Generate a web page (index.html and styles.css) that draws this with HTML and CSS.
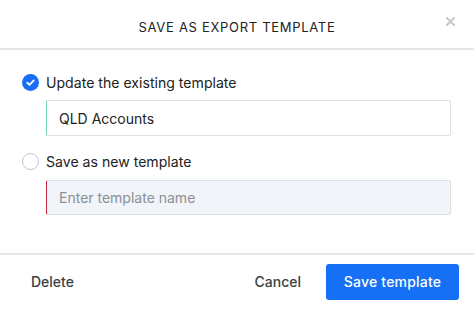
FILE: index.html
```html
<!DOCTYPE html>
<html lang="en">
<head>
  <meta charset="UTF-8" />
  <meta name="viewport" content="width=device-width, initial-scale=1.0"/>
  <title>Save as export template</title>
  <link rel="stylesheet" href="styles.css">
</head>
<body>

  <div class="dialog">
    <header class="dialog-head">
      <h1>Save as export template</h1>
      <button class="close-btn" aria-label="Close">
        <svg width="9" height="9" viewBox="0 0 9 9"><path d="M1 1 L8 8 M8 1 L1 8" stroke="#c4c4c4" stroke-width="1.8" stroke-linecap="round"/></svg>
      </button>
    </header>

    <main class="dialog-body">
      <!-- Existing template -->
      <label class="choice">
        <span class="radio checked">
          <svg width="17" height="17" viewBox="0 0 17 17"><circle cx="8.5" cy="8.5" r="8.5" fill="#1a6ef5"/><path d="M5.2 8.7 L7.5 10.9 L11.8 6.4" fill="none" stroke="#fff" stroke-width="1.8" stroke-linecap="round" stroke-linejoin="round"/></svg>
        </span>
        Update the existing template
      </label>
      <div class="field valid">QLD Accounts</div>

      <!-- New template -->
      <label class="choice second">
        <span class="radio"></span>
        Save as new template
      </label>
      <div class="field invalid placeholder">Enter template name</div>
    </main>

    <footer class="dialog-foot">
      <button class="text-btn">Delete</button>
      <div class="foot-right">
        <button class="text-btn">Cancel</button>
        <button class="primary-btn">Save template</button>
      </div>
    </footer>
  </div>

</body>
</html>
```

FILE: styles.css
```css
:root {
  --text: #222;
  --muted: #8a9099;
  --line: #e6e6e6;
  --primary: #1570f5;
  --ok: #6fd6ae;
  --bad: #c8283c;
}

* {
  box-sizing: border-box;
  margin: 0;
  padding: 0;
}

body {
  font-family: Inter, 'Noto Sans', sans-serif;
  background: #fff;
  color: var(--text);
}

.dialog {
  width: 474px;
  height: 310px;
  display: flex;
  flex-direction: column;
}

.dialog-head {
  position: relative;
  height: 50px;
  border-bottom: 2px solid var(--line);
  display: flex;
  align-items: center;
  justify-content: center;
  padding-top: 5px;
}

.dialog-head h1 {
  font-size: 13px;
  font-weight: 400;
  text-transform: uppercase;
  letter-spacing: 0.7px;
  color: #222;
}

.close-btn {
  position: absolute;
  right: 18px;
  top: 16px;
  background: none;
  border: none;
  width: 11px;
  height: 11px;
  display: flex;
  align-items: center;
  justify-content: center;
}

.dialog-body {
  flex: 1;
  padding: 22px 23px 0 22px;
  display: flex;
  flex-direction: column;
}

.choice {
  display: flex;
  align-items: center;
  gap: 7px;
  height: 20px;
  font-size: 14.1px;
  color: #222;
}

.choice.second {
  margin-top: 15px;
}

.radio {
  width: 17px;
  height: 17px;
  border-radius: 50%;
  border: 1px solid #bfc3c8;
  display: flex;
}

.radio.checked {
  border: none;
}

.field {
  margin: 8px 0 0 24px;
  height: 36px;
  border: 1px solid #dcdfe3;
  border-radius: 2px;
  padding: 0 12px;
  display: flex;
  align-items: center;
  font-size: 14px;
  color: #222;
}

.field.valid {
  border-left-color: var(--ok);
}

.field.invalid {
  margin-top: 9px;
  height: 35px;
  background: #f1f4f8;
  border-left-color: var(--bad);
}

.field.placeholder {
  color: var(--muted);
}

.dialog-foot {
  height: 57px;
  border-top: 2px solid var(--line);
  display: flex;
  align-items: center;
  justify-content: space-between;
  padding: 0 15px 2px 15px;
}

.foot-right {
  display: flex;
  align-items: center;
  gap: 9px;
}

.text-btn {
  background: none;
  border: none;
  font-family: inherit;
  font-size: 14px;
  font-weight: 500;
  color: #3a3f45;
  padding: 8px 16px;
}

.primary-btn {
  background: var(--primary);
  color: #fff;
  border: none;
  border-radius: 3px;
  font-family: inherit;
  font-size: 14px;
  font-weight: 500;
  letter-spacing: 0.2px;
  width: 133px;
  height: 36px;
}
```
